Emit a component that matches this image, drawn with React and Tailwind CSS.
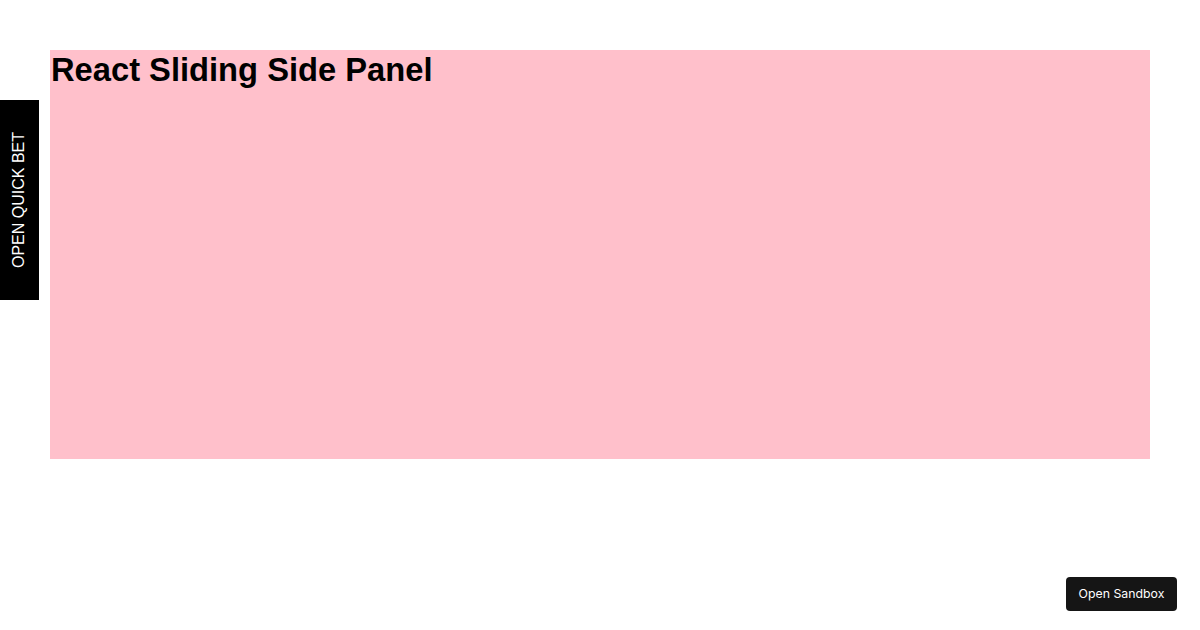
export default function App() {
  return (
    <div className="relative min-h-[630px] bg-white p-[50px]" style={{ fontFamily: '"Liberation Sans", Arial, sans-serif' }}>
      <div className="h-[409px] bg-[#ffc0cb]">
        <h1 className="m-0 pl-px pt-px text-[32.7px] font-bold leading-[37px] text-black">React Sliding Side Panel</h1>
      </div>
      <button className="absolute left-0 top-[100px] flex h-[200px] w-[39px] items-center justify-center bg-black text-white">
        <span className="block -rotate-90 whitespace-nowrap text-[16px] leading-none">OPEN QUICK BET</span>
      </button>
      <button
        className="fixed bottom-[19px] right-[23px] flex h-[34px] w-[111px] items-center justify-center rounded-[4px] bg-[#151515] text-[12.3px] text-white"
        style={{ fontFamily: 'Inter, "Liberation Sans", sans-serif' }}
      >
        Open Sandbox
      </button>
    </div>
  );
}
